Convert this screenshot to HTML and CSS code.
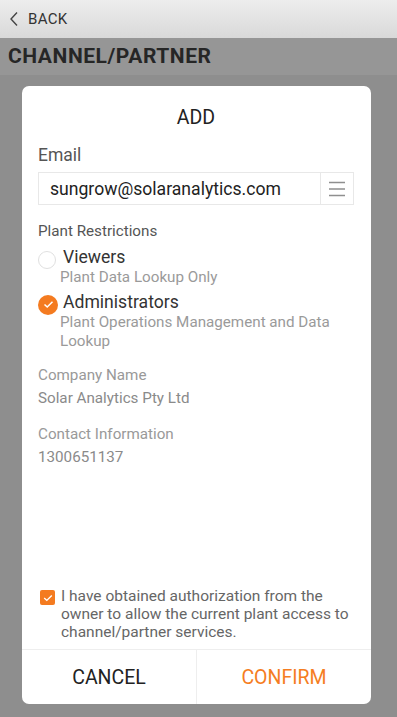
FILE: index.html
```html
<!DOCTYPE html>
<html>
<head>
<meta charset="utf-8">
<link rel="stylesheet" href="styles.css">
</head>
<body>
<div class="topbar">
  <svg class="chev" width="10" height="16" viewBox="0 0 10 16"><path d="M8 1.5 L2 8 L8 14.5" fill="none" stroke="#444" stroke-width="1.4"/></svg>
  <span class="back">BACK</span>
</div>
<div class="titlebar">CHANNEL/PARTNER</div>
<div class="stage">
  <div class="dialog">
    <div class="content">
      <div class="dtitle">ADD</div>
      <div class="label">Email</div>
      <div class="input">
        <div class="value">sungrow@solaranalytics.com</div>
        <div class="menu">
          <svg width="18" height="16" viewBox="0 0 18 16"><path d="M1 1.5h16M1 8h16M1 14.5h16" stroke="#8f8f8f" stroke-width="1.3"/></svg>
        </div>
      </div>
      <div class="sublabel">Plant Restrictions</div>
      <div class="option">
        <span class="radio"></span>
        <div class="opttext">
          <div class="optname">Viewers</div>
          <div class="optdesc">Plant Data Lookup Only</div>
        </div>
      </div>
      <div class="option second">
        <span class="radio on"><svg width="11" height="9" viewBox="0 0 11 9"><path d="M1.5 4.5 L4.2 7 L9.5 1.8" fill="none" stroke="#fff" stroke-width="1.5"/></svg></span>
        <div class="opttext">
          <div class="optname">Administrators</div>
          <div class="optdesc">Plant Operations Management and Data Lookup</div>
        </div>
      </div>
      <div class="field first">
        <div class="flabel">Company Name</div>
        <div class="fvalue">Solar Analytics Pty Ltd</div>
      </div>
      <div class="field">
        <div class="flabel">Contact Information</div>
        <div class="fvalue">1300651137</div>
      </div>
      <div class="spacer"></div>
      <div class="agree">
        <span class="check"><svg width="10" height="8" viewBox="0 0 10 8"><path d="M1.2 4 L3.8 6.4 L8.8 1.4" fill="none" stroke="#fff" stroke-width="1.4"/></svg></span>
        <div class="agreetext">I have obtained authorization from the owner to allow the current plant access to channel/partner services.</div>
      </div>
    </div>
    <div class="buttons">
      <div class="btn cancel">CANCEL</div>
      <div class="btn confirm">CONFIRM</div>
    </div>
  </div>
</div>
</body>
</html>
```

FILE: styles.css
```css
html, body {
  margin: 0;
  padding: 0;
}
body {
  width: 397px;
  height: 717px;
  background: #8e8e8e;
  font-family: Roboto, "Noto Sans", "Liberation Sans", sans-serif;
  overflow: hidden;
}
.topbar {
  height: 38px;
  background: linear-gradient(#ededed, #d9d9d9);
  display: flex;
  align-items: center;
  padding-left: 9px;
  box-sizing: border-box;
}
.chev {
  margin-right: 9px;
}
.back {
  font-size: 15px;
  color: #333;
  letter-spacing: 0.3px;
}
.titlebar {
  height: 37px;
  background: #969696;
  font-size: 21px;
  font-weight: bold;
  color: #262626;
  line-height: 37px;
  padding-left: 8px;
  letter-spacing: 0.55px;
}
.stage {
  padding: 11px 26px 0 22px;
}
.dialog {
  width: 349px;
  height: 618px;
  background: #fff;
  border-radius: 7px;
  display: flex;
  flex-direction: column;
  overflow: hidden;
}
.content {
  flex: 1;
  display: flex;
  flex-direction: column;
  padding: 20px 17px 0 16px;
}
.dtitle {
  text-align: center;
  font-size: 19.5px;
  line-height: 24px;
  color: #222;
}
.label {
  margin-top: 15px;
  font-size: 17.5px;
  line-height: 20px;
  color: #555;
}
.input {
  margin-top: 7px;
  height: 33px;
  border: 1px solid #e8e8e8;
  box-sizing: border-box;
  display: flex;
  align-items: center;
}
.value {
  flex: 1;
  padding-left: 11px;
  font-size: 17.6px;
  color: #222;
}
.menu {
  width: 32px;
  height: 100%;
  border-left: 1px solid #e8e8e8;
  display: flex;
  align-items: center;
  justify-content: center;
}
.sublabel {
  margin-top: 17px;
  font-size: 15.2px;
  line-height: 18px;
  color: #555;
}
.option {
  display: flex;
  align-items: flex-start;
  margin-top: 6px;
}
.option.second {
  margin-top: 3px;
}
.radio {
  width: 18px;
  height: 18px;
  box-sizing: border-box;
  border: 1px solid #e0e0e0;
  border-radius: 50%;
  margin-top: 5px;
  margin-right: 4px;
  flex: none;
  display: flex;
  align-items: center;
  justify-content: center;
}
.radio.on {
  width: 20px;
  height: 20px;
  margin-right: 2px;
  margin-top: 4px;
  border: none;
  background: #f47b20;
}
.opttext {
  flex: 1;
}
.optname {
  font-size: 17.6px;
  line-height: 22px;
  color: #333;
  padding-left: 3px;
}
.optdesc {
  font-size: 15.2px;
  line-height: 19.5px;
  color: #9a9a9a;
}
.field.first {
  margin-top: 13px;
}
.field {
  margin-top: 16px;
}
.flabel {
  font-size: 15.2px;
  line-height: 20px;
  color: #999;
}
.fvalue {
  margin-top: 3px;
  font-size: 15.2px;
  line-height: 20px;
  color: #8a8a8a;
}
.spacer {
  flex: 1;
}
.agree {
  display: flex;
  align-items: flex-start;
  padding-left: 2px;
  margin-bottom: 8px;
}
.check {
  width: 15px;
  height: 15px;
  border-radius: 2px;
  background: #f47b20;
  flex: none;
  margin-top: 3px;
  margin-right: 6px;
  display: flex;
  align-items: center;
  justify-content: center;
}
.agreetext {
  font-size: 15.5px;
  line-height: 18px;
  color: #666;
}
.buttons {
  height: 54px;
  border-top: 1px solid #eeeeee;
  display: flex;
}
.btn {
  flex: 1;
  display: flex;
  align-items: center;
  justify-content: center;
  font-size: 19.5px;
}
.cancel {
  color: #222;
  border-right: 1px solid #eeeeee;
}
.confirm {
  color: #f57d22;
}
```
